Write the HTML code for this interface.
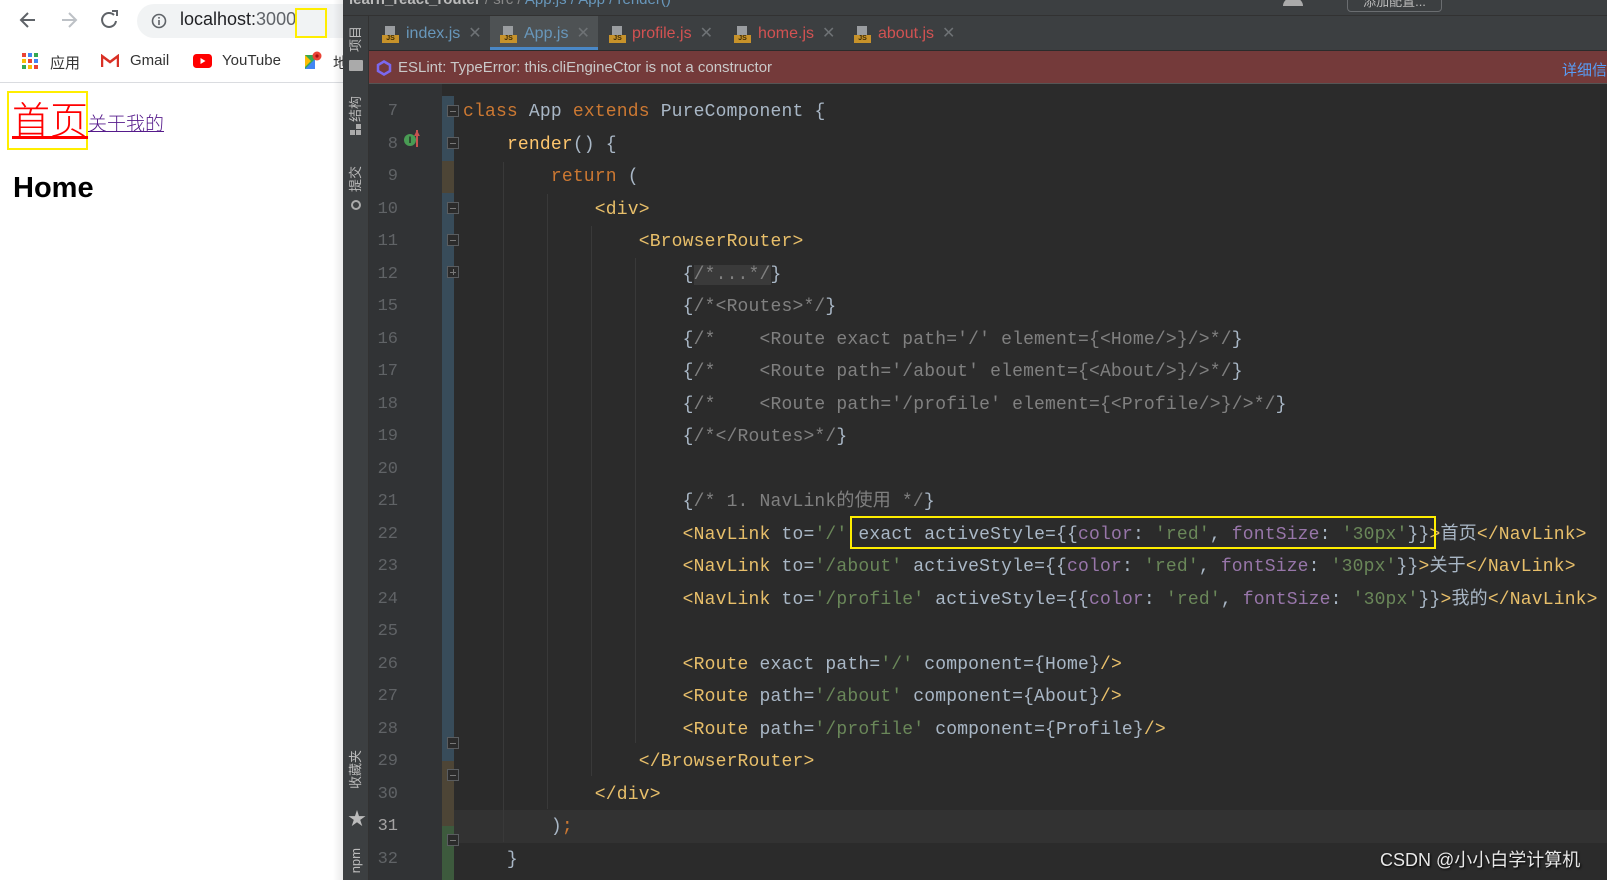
<!DOCTYPE html>
<html><head><meta charset="utf-8">
<style>
*{margin:0;padding:0;box-sizing:border-box}
body{width:1607px;height:880px;overflow:hidden;background:#fff;position:relative;font-family:"Liberation Sans","Noto Sans CJK SC",sans-serif}
.abs{position:absolute}
#browser{left:0;top:0;width:343px;height:880px;background:#fff;overflow:hidden}
#ide{left:343px;top:0;width:1264px;height:880px;background:#2b2b2b;overflow:hidden}
.mono{font-family:"Liberation Mono","Noto Sans CJK SC",monospace}
.row{position:absolute;left:0;height:32.5px;line-height:32.5px;white-space:pre;font-size:18px;letter-spacing:0.18px;color:#a9b7c6}
.kw{color:#cc7832}.tg{color:#e8bf6a}.st{color:#6a8759}.pr{color:#9876aa}.cm{color:#808080}.fn{color:#ffc66d}
.ln{position:absolute;width:55px;text-align:right;font-size:17px;color:#606366;height:32.5px;line-height:32.5px;font-family:"Liberation Mono",monospace}
.tab{position:absolute;top:17px;height:34px;line-height:33px;font-size:16px}
.jsi{position:absolute;width:17px;height:17px;top:9px}
.jsi:before{content:"";position:absolute;left:3px;top:0;width:10px;height:9px;background:#9a9da0}
.jsi:after{content:"JS";position:absolute;left:0;bottom:0;width:17px;height:8px;background:#c7922a;color:#3a2a08;font-size:7px;line-height:8px;font-weight:bold;text-align:center}
.x{color:#6e7275;margin-left:8px}
.vt{position:absolute;left:0;width:26px;color:#bbb;font-size:13px;writing-mode:vertical-rl;text-orientation:sideways;transform:rotate(180deg);text-align:center;line-height:26px}
.fold{position:absolute;left:104px;width:12px;height:12px;border:1px solid #5a5d60;background:#2b2b2b}
.fold:after{content:"";position:absolute;left:2px;top:5px;width:6px;height:1px;background:#777}
</style></head><body>

<div id="browser" class="abs">
  <svg class="abs" style="left:18px;top:9px" width="110" height="22" viewBox="0 0 110 22">
    <path d="M17 11H4M10 4L3 11l7 7" stroke="#5f6368" stroke-width="2" fill="none"/>
    <path d="M44 11h13M51 4l7 7-7 7" stroke="#bdc1c6" stroke-width="2" fill="none"/>
    <path d="M96 6a7 7 0 1 0 2 6" stroke="#5f6368" stroke-width="2" fill="none"/><path d="M94 2h5v5" stroke="#5f6368" stroke-width="2" fill="none"/>
  </svg>
  <div class="abs" style="left:137px;top:4px;width:260px;height:34px;border-radius:17px;background:#f1f3f4"></div>
  <svg class="abs" style="left:151px;top:13px" width="16" height="16"><circle cx="8" cy="8" r="6.5" stroke="#5f6368" stroke-width="1.6" fill="none"/><rect x="7.2" y="7" width="1.6" height="5" fill="#5f6368"/><rect x="7.2" y="4" width="1.6" height="1.6" fill="#5f6368"/></svg>
  <div class="abs" style="left:180px;top:9px;font-size:18px;color:#202124">localhost:<span style="color:#5f6368">3000</span></div>
  <div class="abs" style="left:295px;top:8px;width:32px;height:30px;border:2px solid #ffee00"></div>
  <svg class="abs" style="left:22px;top:53px" width="16" height="16">
    <g><rect x="0" y="0" width="4" height="4" fill="#ea4335"/><rect x="6" y="0" width="4" height="4" fill="#4285f4"/><rect x="12" y="0" width="4" height="4" fill="#34a853"/><rect x="0" y="6" width="4" height="4" fill="#fbbc05"/><rect x="6" y="6" width="4" height="4" fill="#ea4335"/><rect x="12" y="6" width="4" height="4" fill="#4285f4"/><rect x="0" y="12" width="4" height="4" fill="#34a853"/><rect x="6" y="12" width="4" height="4" fill="#fbbc05"/><rect x="12" y="12" width="4" height="4" fill="#ea4335"/></g></svg>
  <div class="abs" style="left:50px;top:52px;font-size:15px;color:#333">应用</div>
  <svg class="abs" style="left:101px;top:54px" width="18" height="14"><path d="M1 13V2l8 6 8-6v11" stroke="#d93025" stroke-width="2.5" fill="none"/></svg>
  <div class="abs" style="left:130px;top:52px;font-size:15px;color:#333">Gmail</div>
  <svg class="abs" style="left:193px;top:54px" width="19" height="14"><rect width="19" height="14" rx="3.5" fill="#ff0000"/><path d="M7.5 4v6l5-3z" fill="#fff"/></svg>
  <div class="abs" style="left:222px;top:52px;font-size:15px;color:#333">YouTube</div>
  <svg class="abs" style="left:305px;top:51px" width="17" height="18"><path d="M0 4l10 0 0 14H0z" fill="#34a853"/><path d="M0 18L10 8v10z" fill="#4285f4"/><path d="M0 4l6 6-6 6z" fill="#fbbc05"/><circle cx="12" cy="5" r="4.5" fill="#ea4335"/><circle cx="12" cy="5" r="1.6" fill="#a50e0e"/></svg>
  <div class="abs" style="left:333px;top:52px;font-size:15px;color:#333">地</div>
  <div class="abs" style="left:0;top:82px;width:343px;height:1px;background:#dadce0"></div>
  <div class="abs" style="left:7px;top:91px;width:81px;height:59px;border:2px solid #ffee00"></div>
  <div class="abs" style="left:12px;top:96px;font-size:38px;line-height:44px;color:#ff0000;text-decoration:underline;font-family:'Noto Sans CJK SC',sans-serif;font-weight:300">首页</div>
  <div class="abs" style="left:88px;top:110px;font-size:19px;line-height:26px;color:#551a8b;text-decoration:underline;font-family:'Noto Sans CJK SC',sans-serif;font-weight:300">关于我的</div>
  <div class="abs" style="left:13px;top:172px;font-size:29px;font-weight:bold;color:#000">Home</div>
  <div class="abs" style="left:333px;top:0;width:10px;height:880px;background:linear-gradient(to right,rgba(0,0,0,0),rgba(0,0,0,0.08))"></div>
</div>

<div id="ide" class="abs">
  <div class="abs" style="left:0;top:0;width:1264px;height:16px;background:#3c3f41;border-bottom:1px solid #323232"></div>
  <div class="abs" style="left:6px;top:-9px;font-size:15px;color:#bbb;font-weight:bold;white-space:nowrap">learn_react_router <span style="font-weight:normal;color:#888">/ src / </span><span style="font-weight:normal;color:#6897bb">App.js / App / render()</span></div>
  <div class="abs" style="left:1004px;top:-6px;width:95px;height:18px;border:1px solid #6a6d70;border-radius:4px;color:#bbb;font-size:13px;text-align:center;line-height:14px">添加配置...</div>
  <div class="abs" style="left:940px;top:-2px;width:20px;height:8px;border-radius:8px 8px 0 0;background:#aaa"></div>
  <div class="abs" style="left:0;top:16px;width:26px;height:864px;background:#3c3f41;border-right:1px solid #323232"></div>
  <div class="vt" style="top:26px">项目</div>
  <div class="abs" style="left:6px;top:60px;width:14px;height:11px;background:#aaa;border-radius:1px"></div>
  <div class="vt" style="top:96px">结构</div>
  <div class="abs" style="left:7px;top:130px;width:5px;height:5px;background:#aaa"></div><div class="abs" style="left:13px;top:130px;width:5px;height:5px;background:#aaa"></div><div class="abs" style="left:13px;top:124px;width:5px;height:5px;background:#aaa"></div>
  <div class="vt" style="top:166px">提交</div>
  <div class="abs" style="left:8px;top:200px;width:10px;height:10px;border:2px solid #aaa;border-radius:50%"></div>
  <div class="vt" style="top:750px">收藏夹</div>
  <div class="abs" style="left:5px;top:810px;color:#bbb;font-size:18px;line-height:18px">★</div>
  <div class="vt" style="top:848px">npm</div>
  <div class="abs" style="left:26px;top:16px;width:1238px;height:34px;background:#3c3f41"></div>
  <div class="abs" style="left:147px;top:16px;width:108px;height:34px;background:#4e5254;border-bottom:3px solid #4a88c7"></div>
  <div class="tab" style="left:39px;color:#6897bb"><span class="jsi" style="left:0"></span><span style="margin-left:24px">index.js</span><span class="x">✕</span></div>
  <div class="tab" style="left:157px;color:#6897bb"><span class="jsi" style="left:0"></span><span style="margin-left:24px">App.js</span><span class="x">✕</span></div>
  <div class="tab" style="left:266px;color:#d25252"><span class="jsi" style="left:0"></span><span style="margin-left:23px">profile.js</span><span class="x">✕</span></div>
  <div class="tab" style="left:391px;color:#d25252"><span class="jsi" style="left:0"></span><span style="margin-left:24px">home.js</span><span class="x">✕</span></div>
  <div class="tab" style="left:511px;color:#d25252"><span class="jsi" style="left:0"></span><span style="margin-left:24px">about.js</span><span class="x">✕</span></div>
  <div class="abs" style="left:26px;top:50px;width:1238px;height:34px;background:#743a3a;border-top:1px solid #2b2b2b;border-bottom:1px solid #555"></div>
  <svg class="abs" style="left:33px;top:60px" width="16" height="16"><polygon points="8,1.5 14,5 14,11 8,14.5 2,11 2,5" stroke="#7b68ee" stroke-width="2.5" fill="none"/></svg>
  <div class="abs" style="left:55px;top:59px;font-size:15px;color:#c9c9c9">ESLint: TypeError: this.cliEngineCtor is not a constructor</div>
  <div class="abs" style="left:1219px;top:59px;font-size:15px;color:#589df6;white-space:nowrap">详细信息</div>
  <div class="abs" style="left:26px;top:84px;width:73px;height:796px;background:#313335"></div>
  <div class="abs" style="left:99px;top:84px;width:12px;height:796px;background:#2b2b2b"></div>
  <div class="abs" style="left:99px;top:96px;width:12px;height:65px;background:#384c5a"></div>
  <div class="abs" style="left:99px;top:161px;width:12px;height:32px;background:#4d4536"></div>
  <div class="abs" style="left:99px;top:193px;width:12px;height:568px;background:#384c5a"></div>
  <div class="abs" style="left:99px;top:761px;width:12px;height:65px;background:#4d4536"></div>
  <div class="abs" style="left:99px;top:826px;width:12px;height:54px;background:#3d5a3d"></div>
  <div class="abs" style="left:111px;top:810px;width:1153px;height:32.5px;background:#323232"></div>
  <div class="abs" style="left:160px;top:162px;width:1px;height:680px;background:#393939"></div>
  <div class="abs" style="left:204px;top:194px;width:1px;height:615px;background:#393939"></div>
  <div class="abs" style="left:248px;top:226px;width:1px;height:550px;background:#393939"></div>
  <div class="abs" style="left:292px;top:258px;width:1px;height:485px;background:#393939"></div>
  <div class="abs" style="left:0;top:96px;width:100px">
    <div class="ln" style="top:0;left:0">7</div>
    <div class="ln" style="top:32.5px">8</div>
    <div class="ln" style="top:65px">9</div>
    <div class="ln" style="top:97.5px">10</div>
    <div class="ln" style="top:130px">11</div>
    <div class="ln" style="top:162.5px">12</div>
    <div class="ln" style="top:195px">15</div>
    <div class="ln" style="top:227.5px">16</div>
    <div class="ln" style="top:260px">17</div>
    <div class="ln" style="top:292.5px">18</div>
    <div class="ln" style="top:325px">19</div>
    <div class="ln" style="top:357.5px">20</div>
    <div class="ln" style="top:390px">21</div>
    <div class="ln" style="top:422.5px">22</div>
    <div class="ln" style="top:455px">23</div>
    <div class="ln" style="top:487.5px">24</div>
    <div class="ln" style="top:520px">25</div>
    <div class="ln" style="top:552.5px">26</div>
    <div class="ln" style="top:585px">27</div>
    <div class="ln" style="top:617.5px">28</div>
    <div class="ln" style="top:650px">29</div>
    <div class="ln" style="top:682.5px">30</div>
    <div class="ln" style="top:715px;color:#a4a3a3">31</div>
    <div class="ln" style="top:747.5px">32</div>
  </div>
  <div class="abs" style="left:61px;top:134px;width:12px;height:12px;border-radius:50%;background:#499c54;color:#222;font-size:9px;line-height:12px;text-align:center;font-weight:bold">I</div>
  <div class="abs" style="left:73px;top:130px;width:2px;height:17px;background:#c75450"></div>
  <div class="abs" style="left:69px;top:130px;color:#c75450;font-size:10px;line-height:8px">▲</div>
  <div class="fold" style="top:105px"></div>
  <div class="fold" style="top:137px"></div>
  <div class="fold" style="top:202px"></div>
  <div class="fold" style="top:234px"></div>
  <div class="fold" style="top:266px"><span style="position:absolute;left:5px;top:2px;width:1px;height:6px;background:#777"></span></div>
  <div class="fold" style="top:737px"></div>
  <div class="fold" style="top:769px"></div>
  <div class="fold" style="top:834px"></div>
  <div class="abs mono" style="left:120px;top:96px;width:1150px">
    <div class="row" style="top:0"><span class="kw">class</span> App <span class="kw">extends</span> PureComponent {</div>
    <div class="row" style="top:32.5px">    <span class="fn">render</span>() {</div>
    <div class="row" style="top:65px">        <span class="kw">return</span> (</div>
    <div class="row" style="top:97.5px">            <span class="tg">&lt;div&gt;</span></div>
    <div class="row" style="top:130px">                <span class="tg">&lt;BrowserRouter&gt;</span></div>
    <div class="row" style="top:162.5px">                    {<span class="cm" style="background:#3a3a3a">/*...*/</span>}</div>
    <div class="row" style="top:195px">                    {<span class="cm">/*&lt;Routes&gt;*/</span>}</div>
    <div class="row" style="top:227.5px">                    {<span class="cm">/*    &lt;Route exact path='/' element={&lt;Home/&gt;}/&gt;*/</span>}</div>
    <div class="row" style="top:260px">                    {<span class="cm">/*    &lt;Route path='/about' element={&lt;About/&gt;}/&gt;*/</span>}</div>
    <div class="row" style="top:292.5px">                    {<span class="cm">/*    &lt;Route path='/profile' element={&lt;Profile/&gt;}/&gt;*/</span>}</div>
    <div class="row" style="top:325px">                    {<span class="cm">/*&lt;/Routes&gt;*/</span>}</div>
    <div class="row" style="top:390px">                    {<span class="cm">/* 1. NavLink的使用 */</span>}</div>
    <div class="row" style="top:422.5px">                    <span class="tg">&lt;NavLink</span> to=<span class="st">'/'</span> exact activeStyle={{<span class="pr">color</span>: <span class="st">'red'</span>, <span class="pr">fontSize</span>: <span class="st">'30px'</span>}}<span class="tg">&gt;</span>首页<span class="tg">&lt;/NavLink&gt;</span></div>
    <div class="row" style="top:455px">                    <span class="tg">&lt;NavLink</span> to=<span class="st">'/about'</span> activeStyle={{<span class="pr">color</span>: <span class="st">'red'</span>, <span class="pr">fontSize</span>: <span class="st">'30px'</span>}}<span class="tg">&gt;</span>关于<span class="tg">&lt;/NavLink&gt;</span></div>
    <div class="row" style="top:487.5px">                    <span class="tg">&lt;NavLink</span> to=<span class="st">'/profile'</span> activeStyle={{<span class="pr">color</span>: <span class="st">'red'</span>, <span class="pr">fontSize</span>: <span class="st">'30px'</span>}}<span class="tg">&gt;</span>我的<span class="tg">&lt;/NavLink&gt;</span></div>
    <div class="row" style="top:552.5px">                    <span class="tg">&lt;Route</span> exact path=<span class="st">'/'</span> component={Home}<span class="tg">/&gt;</span></div>
    <div class="row" style="top:585px">                    <span class="tg">&lt;Route</span> path=<span class="st">'/about'</span> component={About}<span class="tg">/&gt;</span></div>
    <div class="row" style="top:617.5px">                    <span class="tg">&lt;Route</span> path=<span class="st">'/profile'</span> component={Profile}<span class="tg">/&gt;</span></div>
    <div class="row" style="top:650px">                <span class="tg">&lt;/BrowserRouter&gt;</span></div>
    <div class="row" style="top:682.5px">            <span class="tg">&lt;/div&gt;</span></div>
    <div class="row" style="top:715px">        )<span class="kw">;</span></div>
    <div class="row" style="top:747.5px">    }</div>
  </div>
  <div class="abs" style="left:507px;top:516px;width:586px;height:33px;border:2px solid #ffee00"></div>
  <div class="abs" style="left:1037px;top:846px;font-size:18px;color:#e8e8e8;text-shadow:1px 1px 2px #000;white-space:nowrap">CSDN @小小白学计算机</div>
</div>
</body></html>
